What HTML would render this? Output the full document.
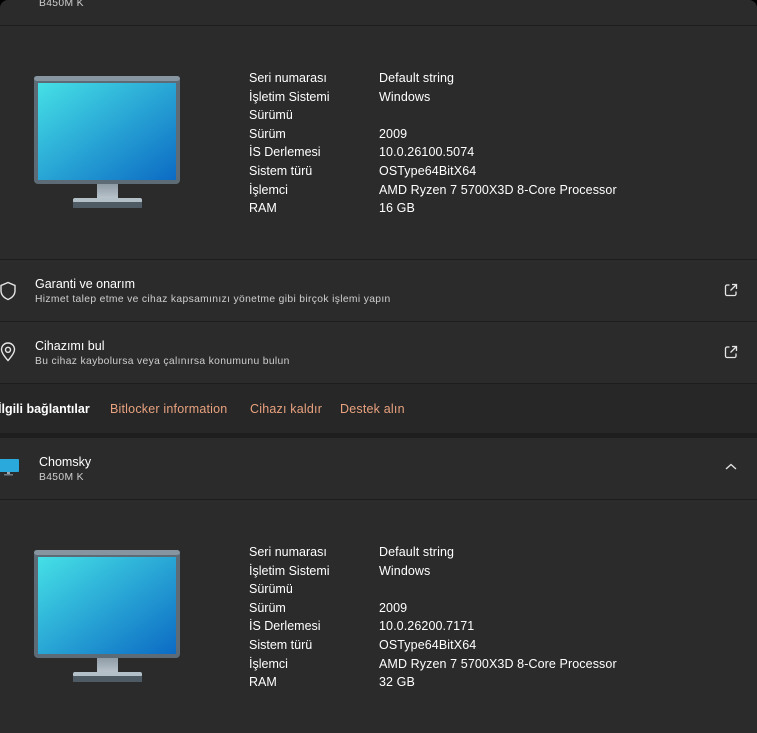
<!DOCTYPE html>
<html><head><meta charset="utf-8"><style>
*{margin:0;padding:0;box-sizing:border-box}
body{width:757px;height:733px;overflow:hidden;background:#000;font-family:"Liberation Sans",sans-serif;color:#fff;position:relative}
.wrap{position:absolute;left:0;top:0;width:757px;height:733px;background:#2b2b2b;border-radius:8px 8px 0 0;overflow:hidden}
.abs{position:absolute}
.sep{position:absolute;left:0;width:757px;height:1px;background:#1d1d1d}
.lbl{position:absolute;left:249px;font-size:12.5px;line-height:18.6px;color:#fff}
.val{position:absolute;left:379px;font-size:12.5px;line-height:18.6px;color:#fff;letter-spacing:0.1px}
.t{font-size:12.5px}
.s{font-size:10.3px;color:#cfcfcf;letter-spacing:0.35px}
.link{color:#e8a27f;font-size:12.5px;position:absolute;top:402px;letter-spacing:0.2px}
</style></head><body>
<div class="wrap">
<div class="abs s" style="left:39px;top:-2px;font-size:10.3px">B450M K</div>
<div class="sep" style="top:25px"></div>

<svg class="abs" style="left:33px;top:75px" width="150" height="136" viewBox="0 0 150 136">
<defs><linearGradient id="g" x1="0" y1="0" x2="1" y2="1"><stop offset="0" stop-color="#45e0e6"/><stop offset="1" stop-color="#0c6bc4"/></linearGradient>
<linearGradient id="n" x1="0" y1="0" x2="0" y2="1"><stop offset="0" stop-color="#8f9ba5"/><stop offset="1" stop-color="#bac5cd"/></linearGradient></defs>
<rect x="1" y="1" width="146" height="108" rx="4" fill="#5c6b76"/>
<rect x="1" y="1" width="146" height="5" rx="3" fill="#8795a0"/>
<rect x="5" y="8" width="138" height="97" fill="url(#g)"/>
<rect x="64" y="109" width="21" height="15" fill="url(#n)"/>
<rect x="40" y="123" width="69" height="5" rx="2" fill="#b4c0c8"/>
<rect x="40" y="127" width="69" height="6" fill="#4f5b64"/>
</svg>
<div class="lbl" style="top:69px">Seri numarası<br>İşletim Sistemi<br>Sürümü<br>Sürüm<br>İS Derlemesi<br>Sistem türü<br>İşlemci<br>RAM</div>
<div class="val" style="top:69px">Default string<br>Windows<br><br>2009<br>10.0.26100.5074<br>OSType64BitX64<br>AMD Ryzen 7 5700X3D 8-Core Processor<br>16 GB</div>

<div class="sep" style="top:259px"></div>
<svg class="abs" style="left:-1px;top:281px" width="18" height="20" viewBox="0 0 18 20"><path d="M9 1.5 L2 4.5 V9.5 C2 14 5 16.8 9 18.5 C13 16.8 16 14 16 9.5 V4.5 Z" fill="none" stroke="#e6e6e6" stroke-width="1.4"/></svg>
<div class="abs t" style="left:35px;top:277px">Garanti ve onarım</div>
<div class="abs s" style="left:35px;top:294px">Hizmet talep etme ve cihaz kapsamınızı yönetme gibi birçok işlemi yapın</div>
<svg class="abs" style="left:724px;top:283px" width="14" height="14" viewBox="0 0 14 14"><path d="M5.5 2 H3 A1.5 1.5 0 0 0 1.5 3.5 V11 A1.5 1.5 0 0 0 3 12.5 H10.5 A1.5 1.5 0 0 0 12 11 V8.5 M8 1.5 H12.5 V6 M12.5 1.5 L6.5 7.5" fill="none" stroke="#e6e6e6" stroke-width="1.3"/></svg>
<div class="sep" style="top:321px"></div>

<svg class="abs" style="left:-1px;top:342px" width="18" height="20" viewBox="0 0 18 20"><path d="M9 18.5 C5 14 2.5 10.5 2.5 7.5 A6.5 6.5 0 0 1 15.5 7.5 C15.5 10.5 13 14 9 18.5 Z" fill="none" stroke="#e6e6e6" stroke-width="1.4"/><circle cx="9" cy="7.8" r="2.5" fill="none" stroke="#e6e6e6" stroke-width="1.4"/></svg>
<div class="abs t" style="left:35px;top:339px">Cihazımı bul</div>
<div class="abs s" style="left:35px;top:356px">Bu cihaz kaybolursa veya çalınırsa konumunu bulun</div>
<svg class="abs" style="left:724px;top:345px" width="14" height="14" viewBox="0 0 14 14"><path d="M5.5 2 H3 A1.5 1.5 0 0 0 1.5 3.5 V11 A1.5 1.5 0 0 0 3 12.5 H10.5 A1.5 1.5 0 0 0 12 11 V8.5 M8 1.5 H12.5 V6 M12.5 1.5 L6.5 7.5" fill="none" stroke="#e6e6e6" stroke-width="1.3"/></svg>
<div class="sep" style="top:383px"></div>

<div class="abs" style="left:0;top:384px;width:757px;height:49px;background:#272727"></div>
<div class="abs" style="left:-2px;top:402px;font-size:12.5px;font-weight:bold">İlgili bağlantılar</div>
<div class="link" style="left:110px">Bitlocker information</div>
<div class="link" style="left:250px">Cihazı kaldır</div>
<div class="link" style="left:340px">Destek alın</div>
<div class="abs" style="left:0;top:433px;width:757px;height:5px;background:#1e1e1e"></div>

<svg class="abs" style="left:-2px;top:458px" width="22" height="20" viewBox="0 0 22 20"><rect x="0" y="1" width="21" height="13" rx="1" fill="#2aa9dc"/><rect x="9" y="14" width="3" height="2" fill="#9aa5ad"/><rect x="6" y="16" width="9" height="1.5" fill="#6f7a82"/></svg>
<div class="abs" style="left:39px;top:455px;font-size:12.5px">Chomsky</div>
<div class="abs s" style="left:39px;top:472px">B450M K</div>
<svg class="abs" style="left:724px;top:462px" width="14" height="10" viewBox="0 0 14 10"><path d="M2 7 L7 2.5 L12 7" fill="none" stroke="#e6e6e6" stroke-width="1.3"/></svg>
<div class="sep" style="top:499px"></div>

<svg class="abs" style="left:33px;top:549px" width="150" height="136" viewBox="0 0 150 136">
<rect x="1" y="1" width="146" height="108" rx="4" fill="#5c6b76"/>
<rect x="1" y="1" width="146" height="5" rx="3" fill="#8795a0"/>
<rect x="5" y="8" width="138" height="97" fill="url(#g)"/>
<rect x="64" y="109" width="21" height="15" fill="url(#n)"/>
<rect x="40" y="123" width="69" height="5" rx="2" fill="#b4c0c8"/>
<rect x="40" y="127" width="69" height="6" fill="#4f5b64"/>
</svg>
<div class="lbl" style="top:543px">Seri numarası<br>İşletim Sistemi<br>Sürümü<br>Sürüm<br>İS Derlemesi<br>Sistem türü<br>İşlemci<br>RAM</div>
<div class="val" style="top:543px">Default string<br>Windows<br><br>2009<br>10.0.26200.7171<br>OSType64BitX64<br>AMD Ryzen 7 5700X3D 8-Core Processor<br>32 GB</div>
</div>
</body></html>
